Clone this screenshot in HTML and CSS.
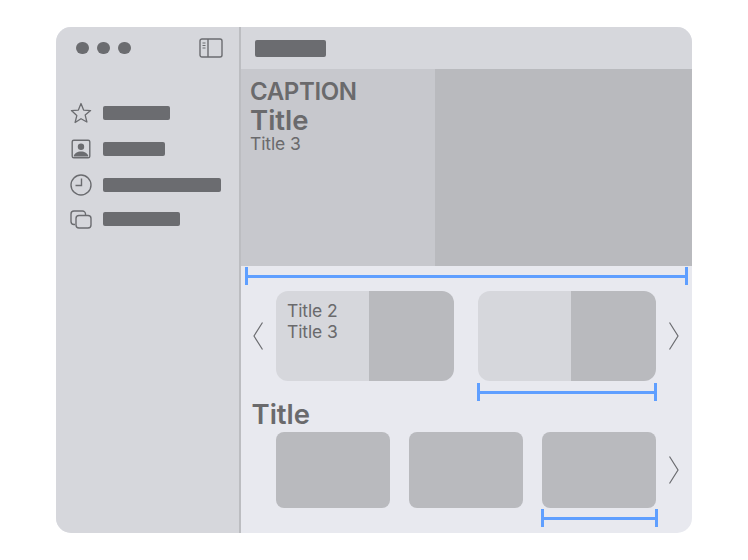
FILE: index.html
```html
<!DOCTYPE html>
<html lang="en">
<head>
  <meta charset="UTF-8">
  <title>Window layout</title>
  <link rel="stylesheet" href="styles.css">
</head>
<body>

<div class="window">
  <div class="sidebar">
    <div class="controls">
      <div class="dots"><span></span><span></span><span></span></div>
      <svg class="toggle" width="24" height="20" viewBox="0 0 24 20" fill="none" stroke="#6b6c70">
        <rect x="1" y="1" width="22" height="18" rx="2" stroke-width="1.4"/>
        <path d="M9 1v18" stroke-width="1.4"/>
        <path d="M3.5 5h3M3.5 7.5h3M3.5 10h3" stroke-width="1"/>
      </svg>
    </div>
    <ul class="nav">
      <li class="nav-star">
        <svg width="22" height="22" viewBox="0 0 22 22" fill="none" stroke="#6b6c70" stroke-width="1.3" stroke-linejoin="round"><path d="M11 1.5l2.6 6.6 7 .5-5.4 4.5 1.7 6.9L11 16.7l-5.9 3.800 1.700-6.900L1.400 8.600l7-.5z"/></svg>
        <span class="bar bar-1"></span>
      </li>
      <li class="nav-person">
        <svg width="22" height="22" viewBox="0 0 22 22" fill="none"><rect x="2.2" y="2.2" width="17.6" height="17.6" rx="1.6" stroke="#6b6c70" stroke-width="1.4"/><circle cx="11" cy="8.8" r="3.2" fill="#6b6c70"/><path d="M3.6 18.4c.8-3.400 3.700-5 7.400-5s6.600 1.600 7.400 5z" fill="#6b6c70"/></svg>
        <span class="bar bar-2"></span>
      </li>
      <li class="nav-clock">
        <svg width="22" height="22" viewBox="0 0 22 22" fill="none" stroke="#6b6c70" stroke-width="1.400"><circle cx="11" cy="11" r="10"/><path d="M11.500 4.500v7H5.500"/></svg>
        <span class="bar bar-3"></span>
      </li>
      <li class="nav-copy">
        <svg width="22" height="22" viewBox="0 0 22 22" fill="none" stroke="#6b6c70" stroke-width="1.400"><path d="M5 16.500H4a3 3 0 0 1-3-3V6a3 3 0 0 1 3-3h8.500a3 3 0 0 1 3 3v1"/><rect x="6" y="7.500" width="15" height="12.500" rx="3"/></svg>
        <span class="bar bar-4"></span>
      </li>
    </ul>
  </div>

  <div class="main">
    <div class="toolbar"><span class="bar bar-title"></span></div>

    <div class="hero">
      <div class="hero-text">
        <div class="caption">CAPTION</div>
        <div class="hero-title">Title</div>
        <div class="hero-sub">Title 3</div>
      </div>
      <div class="hero-media"></div>
    </div>

    <div class="measure measure-full"><i></i></div>

    <div class="shelf shelf-top">
      <svg class="chev" width="10" height="28" viewBox="0 0 10 28" fill="none" stroke="#6b6c70" stroke-width="1.200"><path d="M9.500 .5L1 14l8.500 13.500"/></svg>
      <div class="cards-two">
        <div class="card">
          <div class="card-text">Title 2<br>Title 3</div>
          <div class="card-media"></div>
        </div>
        <div class="card">
          <div class="card-text"></div>
          <div class="card-media"></div>
        </div>
      </div>
      <svg class="chev" width="10" height="28" viewBox="0 0 10 28" fill="none" stroke="#6b6c70" stroke-width="1.200"><path d="M.5 .5L9 14 .5 27.500"/></svg>
    </div>
    <div class="measure measure-card"><i></i></div>

    <h3 class="section-title">Title</h3>

    <div class="shelf shelf-bottom">
      <span></span>
      <div class="cards-three">
        <div class="tile"></div>
        <div class="tile"></div>
        <div class="tile"></div>
      </div>
      <svg class="chev" width="10" height="28" viewBox="0 0 10 28" fill="none" stroke="#6b6c70" stroke-width="1.200"><path d="M.5 .5L9 14 .5 27.500"/></svg>
    </div>
    <div class="measure measure-tile"><i></i></div>
  </div>
</div>

</body>
</html>
```

FILE: styles.css
```css
body {
  margin: 0;
  padding: 27px 0 0 56px;
  background: #fff;
  font-family: Inter, "Liberation Sans", sans-serif;
  color: #6a6a6c;
}
.window {
  display: flex;
  width: 636px;
  height: 506px;
  border-radius: 15px;
  overflow: hidden;
  background: #e8e9ef;
}
.sidebar {
  width: 183px;
  background: #d6d7dc;
  border-right: 2px solid #bcbdc1;
}
.controls {
  display: flex;
  justify-content: space-between;
  align-items: center;
  padding: 11px 16px 0 20px;
}
.dots {
  display: flex;
  gap: 8.500px;
}
.dots span {
  width: 12.500px;
  height: 12.500px;
  border-radius: 50%;
  background: #6b6c70;
}
.nav {
  list-style: none;
  margin: 44px 0 0;
  padding: 0 0 0 13.500px;
}
.nav li {
  display: flex;
  align-items: center;
  gap: 11.500px;
  height: 22px;
  margin-bottom: 14px;
}
.nav .nav-copy {
  margin-top: -2px;
}
.bar {
  display: block;
  height: 14px;
  border-radius: 2px;
  background: #6b6c70;
}
.bar-1 { width: 67px; }
.bar-2 { width: 62px; }
.bar-3 { width: 118px; }
.bar-4 { width: 77px; }
.main {
  flex: 1;
  min-width: 0;
  display: flex;
  flex-direction: column;
}
.toolbar {
  height: 42px;
  flex: none;
  display: flex;
  align-items: center;
  padding-left: 14px;
  background: #d6d7dc;
}
.bar-title {
  width: 71px;
  height: 17px;
}
.hero {
  height: 197px;
  flex: none;
  display: flex;
}
.hero-text {
  width: 194px;
  padding: 9px 0 0 9px;
  box-sizing: border-box;
  background: #c7c8cd;
}
.caption {
  font-size: 24px;
  font-weight: 600;
  line-height: 28px;
  letter-spacing: -.35px;
}
.hero-title {
  font-size: 27.500px;
  font-weight: 600;
  line-height: 28px;
}
.hero-sub {
  font-size: 17.500px;
  line-height: 20px;
  letter-spacing: -.1px;
}
.hero-media {
  flex: 1;
  background: #b9babe;
}
.measure {
  display: flex;
  align-items: center;
  height: 18px;
  flex: none;
  box-sizing: border-box;
  border-left: 3px solid #5f9fff;
  border-right: 3px solid #5f9fff;
}
.measure i {
  flex: 1;
  height: 3px;
  background: #5f9fff;
}
.measure-full {
  margin: 1px 4px 0 4px;
}
.measure-card {
  margin: 2px 0 0 236px;
  width: 180px;
}
.measure-tile {
  margin: 1px 0 0 300px;
  width: 117px;
}
.shelf {
  display: grid;
  grid-template-columns: 10px 380px 10px;
  column-gap: 13px;
  align-items: center;
  padding-left: 12px;
}
.shelf-top {
  margin-top: 6px;
}
.cards-two {
  display: flex;
  gap: 24px;
}
.card {
  flex: 1;
  height: 90px;
  display: flex;
  border-radius: 12px;
  overflow: hidden;
}
.card-text {
  width: 93px;
  padding: 9px 0 0 11px;
  box-sizing: border-box;
  background: #d6d7dc;
  font-size: 17.500px;
  line-height: 21px;
  letter-spacing: -.1px;
}
.card-media {
  flex: 1;
  background: #b9babe;
}
.section-title {
  margin: -1px 0 0;
  padding: 0 0 0 10.500px;
  height: 32px;
  font-size: 27.500px;
  font-weight: 600;
  line-height: 28px;
}
.cards-three {
  display: flex;
  gap: 19px;
}
.tile {
  flex: 1;
  height: 76px;
  border-radius: 8px;
  background: #b9babe;
}
```
